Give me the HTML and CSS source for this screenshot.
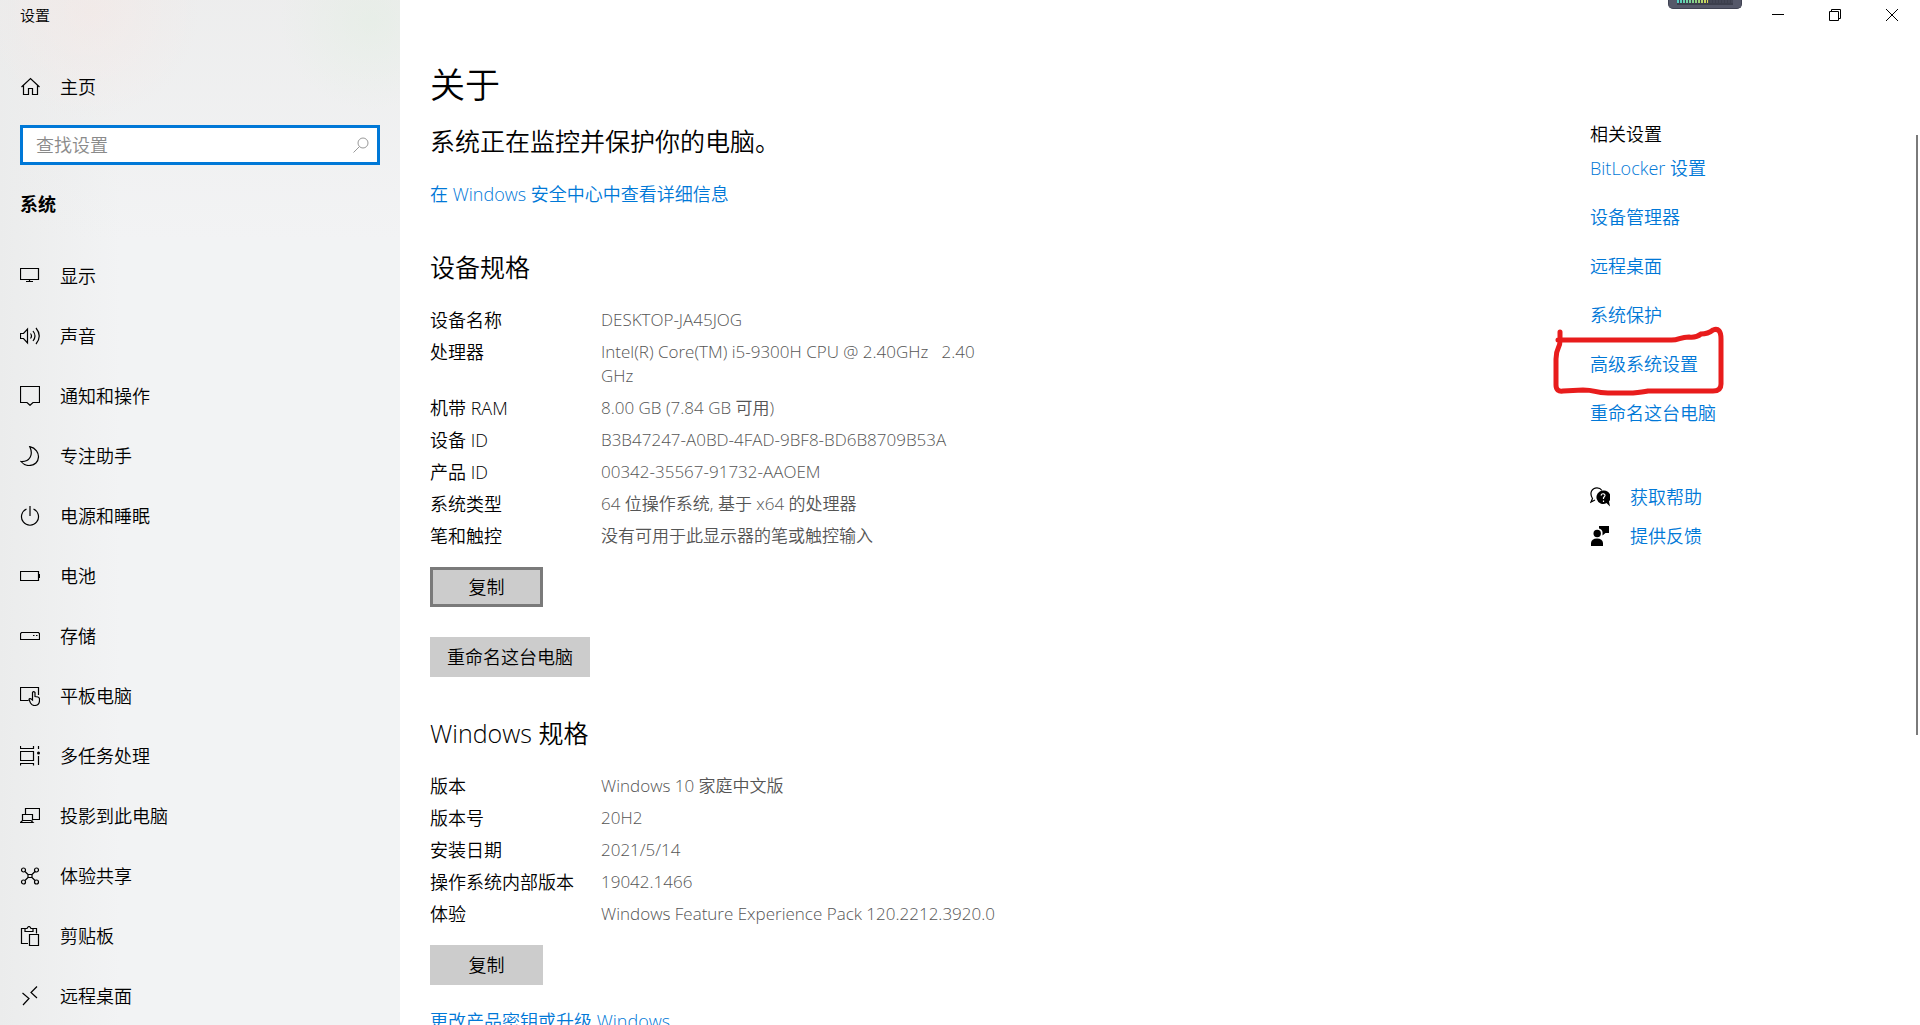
FILE: index.html
```html
<!DOCTYPE html>
<html lang="zh-CN">
<head>
  <meta charset="UTF-8">
  <meta name="viewport" content="width=device-width, initial-scale=1.0">
  <title>设置</title>
  <link rel="stylesheet" href="styles.css">
</head>
<body>
  <aside class="sidebar">
    <div class="app-title">设置</div>
    <a class="nav-link home" href="#">
      <svg class="icon" viewBox="0 0 20 20"><path d="M1.5 10 L10.5 1.5 L19.5 10 M3.5 8.5 V17.500 H8.5 V11.500 H12.500 V17.500 H17.500 V8.5"/></svg>
      主页
    </a>
    <div class="search">
      <input type="text" id="search" placeholder="查找设置" aria-label="查找设置">
      <svg class="search-icon" viewBox="0 0 16 16"><circle cx="10" cy="6" r="5"/><path d="M6.500 9.500 L0.500 15.500"/></svg>
    </div>
    <h2 class="group-title">系统</h2>
    <nav class="nav">
      <a class="nav-link" href="#">
        <svg class="icon" viewBox="0 0 20 20"><path d="M0.500 2.500 H18.500 V13.500 H0.500 Z M9.500 13.500 V15.500 M6 15.500 H13"/></svg>
        显示
      </a>
      <a class="nav-link" href="#">
        <svg class="icon" viewBox="0 0 20 20"><path d="M0.500 7.500 H3.500 L7.500 3 V17 L3.500 12.500 H0.500 Z M10.500 7.500 Q12.500 10 10.500 12.500 M13 5 Q17 10 13 15 M16 2 Q22.500 10 16 18"/></svg>
        声音
      </a>
      <a class="nav-link" href="#">
        <svg class="icon" viewBox="0 0 20 20"><path d="M0.500 0.500 H19.500 V16.500 H13 L10 19.300 L7 16.500 H0.500 Z"/></svg>
        通知和操作
      </a>
      <a class="nav-link" href="#">
        <svg class="icon" viewBox="0 0 20 20"><path d="M9.800 0.700 C22 3.500 21 19.500 9 19.500 C5.500 19.500 3 18 1 15.500 C10 16 13.500 8.500 9.800 0.700 Z"/></svg>
        专注助手
      </a>
      <a class="nav-link" href="#">
        <svg class="icon" viewBox="0 0 20 20"><path d="M6.500 3 A8.500 8.500 0 1 0 13.500 3 M10 0 V10"/></svg>
        电源和睡眠
      </a>
      <a class="nav-link" href="#">
        <svg class="icon" viewBox="0 0 20 20"><path d="M0.500 5.500 H18.500 V14.500 H0.500 Z M19.500 8 V12"/></svg>
        电池
      </a>
      <a class="nav-link" href="#">
        <svg class="icon" viewBox="0 0 20 20"><path d="M1.500 6.500 H18.500 L19.500 7.500 V13.500 H0.500 V7.500 Z M13 9.500 H14.500 M16 9.500 H17.500"/></svg>
        存储
      </a>
      <a class="nav-link" href="#">
        <svg class="icon" viewBox="0 0 20 20"><path d="M8.500 14.500 H0.500 V1.500 H18.500 V9 M12.500 14 V6.500 Q13.500 4.800 15 6.500 V10.500 L18 11 Q19.500 11.500 19.500 13 V15 Q19 19.500 14.500 19.500 Q12 19.500 10.500 17 L9 13.500 Q9.500 11.500 12.500 14 Z"/></svg>
        平板电脑
      </a>
      <a class="nav-link" href="#">
        <svg class="icon" viewBox="0 0 20 20"><path d="M0.500 0 V2.500 H13.500 V0 M0.500 5.500 H13.500 V14.500 H0.500 Z M0.500 19.500 V17.500 H13.500 V19.500 M18.500 0 V3 M18.500 10 V19"/><circle class="fill" cx="18.500" cy="7" r="1.500"/></svg>
        多任务处理
      </a>
      <a class="nav-link" href="#">
        <svg class="icon" viewBox="0 0 20 20"><path d="M5.500 8 V2.500 H19.500 V13.500 H13 M2.500 14.500 V8.500 H12.500 V14.500 M0.500 16.500 L2.500 14.500 H11 L13 16.500 Z"/></svg>
        投影到此电脑
      </a>
      <a class="nav-link" href="#">
        <svg class="icon" viewBox="0 0 20 20"><circle cx="3.500" cy="4" r="2"/><circle cx="16.500" cy="4" r="2"/><circle cx="3.500" cy="16" r="2"/><circle cx="16.500" cy="16" r="2"/><path d="M5 5.500 L8 8.500 M15 5.500 L12 8.500 M5 14.500 L8 11.500 M15 14.500 L12 11.500 M8 8.500 H12 V11.500 H8 Z"/></svg>
        体验共享
      </a>
      <a class="nav-link" href="#">
        <svg class="icon" viewBox="0 0 20 20"><path d="M8 17.500 H1.500 V2.500 H5 M13 2.500 H16.500 V7.500 M5 5.500 V2.500 H7 Q9 -1.500 11 2.500 H13 V5.500 Z M9.500 8.500 H18.500 V19.500 H9.500 Z"/></svg>
        剪贴板
      </a>
      <a class="nav-link" href="#">
        <svg class="icon" viewBox="0 0 20 20"><path d="M2.500 7 L9 12.500 L3 19 M17 0.500 L11 6.500 L17 12"/></svg>
        远程桌面
      </a>
    </nav>
  </aside>

  <main class="content">
    <section class="about">
      <h1>关于</h1>
      <p class="status">系统正在监控并保护你的电脑。</p>
      <a class="link" href="#">在 Windows 安全中心中查看详细信息</a>

      <h2>设备规格</h2>
      <table class="specs">
        <tr><th>设备名称</th><td>DESKTOP-JA45JOG</td></tr>
        <tr><th>处理器</th><td>Intel(R) Core(TM) i5-9300H CPU @ 2.40GHz &nbsp; 2.40 GHz</td></tr>
        <tr><th>机带 RAM</th><td>8.00 GB (7.84 GB 可用)</td></tr>
        <tr><th>设备 ID</th><td>B3B47247-A0BD-4FAD-9BF8-BD6B8709B53A</td></tr>
        <tr><th>产品 ID</th><td>00342-35567-91732-AAOEM</td></tr>
        <tr><th>系统类型</th><td>64 位操作系统, 基于 x64 的处理器</td></tr>
        <tr><th>笔和触控</th><td>没有可用于此显示器的笔或触控输入</td></tr>
      </table>
      <div class="buttons">
        <button class="btn copy active" type="button">复制</button>
        <button class="btn" type="button">重命名这台电脑</button>
      </div>

      <h2>Windows 规格</h2>
      <table class="specs">
        <tr><th>版本</th><td>Windows 10 家庭中文版</td></tr>
        <tr><th>版本号</th><td>20H2</td></tr>
        <tr><th>安装日期</th><td>2021/5/14</td></tr>
        <tr><th>操作系统内部版本</th><td>19042.1466</td></tr>
        <tr><th>体验</th><td>Windows Feature Experience Pack 120.2212.3920.0</td></tr>
      </table>
      <div class="buttons">
        <button class="btn copy" type="button">复制</button>
      </div>
      <a class="link" href="#">更改产品密钥或升级 Windows</a>
    </section>

    <aside class="related">
      <h3>相关设置</h3>
      <ul class="related-links">
        <li><a class="link" href="#">BitLocker 设置</a></li>
        <li><a class="link" href="#">设备管理器</a></li>
        <li><a class="link" href="#">远程桌面</a></li>
        <li><a class="link" href="#">系统保护</a></li>
        <li class="marked">
          <a class="link" href="#">高级系统设置</a>
          <svg class="marker" viewBox="0 0 172 72"><path d="M7 7 V16 C7 24 3 22 3 34 V60 Q3 67 10 66 L30 65 C44 65 40 68 55 68 H80 Q90 67 95 66 H160 Q168 66 168 59 V14 Q168 2 160 5 Q155 9 148 9 Q143 13 136 12 C126 12 126 16 116 15 H5"/></svg>
        </li>
        <li><a class="link" href="#">重命名这台电脑</a></li>
      </ul>
      <ul class="support">
        <li>
          <svg class="icon" viewBox="0 0 20 20"><path d="M5 13 L1 15 L2.500 11.500 C-1 6 2 0.800 7 0.800 C9.500 0.800 11 2 12 3.500"/><path class="fill" d="M13 3.500 A6.700 6.700 0 1 0 16.500 16 L20 19.500 L19 14.500 A6.700 6.700 0 0 0 13 3.500 Z"/><path class="light" d="M11 8.500 Q11.500 6.500 13.500 6.800 Q15.500 7.500 14.800 9 L13.500 10.800 V12 M13.500 13.500 V15"/></svg>
          <a class="link" href="#">获取帮助</a>
        </li>
        <li>
          <svg class="icon" viewBox="0 0 20 20"><circle class="fill" cx="7.200" cy="7.500" r="3.700"/><path class="fill" d="M1 20 V17 Q1.500 12.500 7 12.500 Q12.500 12.500 13 17 V20 Z M9 0 H19 V7 H15.500 L12.500 9.500 V6 Q12 3 9 2.500 Z"/></svg>
          <a class="link" href="#">提供反馈</a>
        </li>
      </ul>
    </aside>
    <div class="scroll-thumb"></div>
  </main>

  <div class="window-buttons">
    <button type="button" aria-label="最小化"><svg viewBox="0 0 12 12"><path d="M0 5.500 H12"/></svg></button>
    <button type="button" aria-label="还原"><svg viewBox="0 0 12 12"><path d="M0.500 2.500 H9.500 V11.500 H0.500 Z M2.500 2.500 V0.500 H11.500 V9.500 H9.500"/></svg></button>
    <button type="button" aria-label="关闭"><svg viewBox="0 0 12 12"><path d="M0 0 L12 12 M12 0 L0 12"/></svg></button>
  </div>
  <div class="meter"><div class="meter-bars"></div></div>
</body>
</html>
```
FILE: styles.css
```css
* {
  box-sizing: border-box;
  margin: 0;
  padding: 0;
}

body {
  display: flex;
  height: 100vh;
  overflow: hidden;
  font-family: 'Open Sans', 'Noto Sans CJK SC', sans-serif;
  font-size: 18px;
  font-weight: 350;
  line-height: 24px;
  color: #000;
  background: #fff;
}

h1, h2, h3, th {
  font-weight: inherit;
  text-align: left;
}

ul {
  list-style: none;
}

svg {
  flex: none;
  fill: none;
  stroke: #000;
  stroke-width: 1.2;
}

.fill {
  fill: #000;
  stroke: none;
}

.light {
  stroke: #fff;
}

.icon {
  width: 20px;
  height: 20px;
}

/* Sidebar */
.sidebar {
  flex: 0 0 400px;
  padding: 0 20px;
  overflow: hidden;
  background:
    radial-gradient(circle at 90px 10px, rgba(255, 225, 218, 0.25), transparent 110px),
    radial-gradient(circle at 370px 20px, rgba(220, 238, 220, 0.35), transparent 90px),
    linear-gradient(rgba(236, 236, 236, 0.8), transparent 240px),
    linear-gradient(90deg, #ebecec, #f2f3f4 30%, #f2f3f4);
}

.app-title {
  height: 57px;
  padding-top: 3px;
  font-size: 15px;
}

.nav-link {
  display: flex;
  align-items: center;
  gap: 20px;
  height: 60px;
  color: #000;
  text-decoration: none;
}

.nav-link:hover {
  background: rgba(0, 0, 0, 0.06);
}

.search {
  display: flex;
  align-items: center;
  height: 40px;
  margin-top: 8px;
  padding: 0 8px 0 13px;
  border: 3px solid #0078d7;
  background: #fff;
}

.search input {
  flex: 1;
  min-width: 0;
  border: none;
  outline: none;
  font: inherit;
  background: none;
}

.search input::placeholder {
  color: #8a8a8a;
}

.search-icon {
  width: 16px;
  height: 16px;
  stroke: #999;
  stroke-width: 1;
}

.group-title {
  margin: 27px 0 30px;
  font-size: 18px;
  font-weight: 700;
}

/* Content */
.content {
  position: relative;
  flex: 1;
  display: flex;
  justify-content: space-between;
  padding-left: 30px;
  overflow: hidden;
}

.about {
  width: 580px;
  padding-top: 61px;
}

.about h1 {
  font-size: 35px;
  line-height: 48px;
}

.status {
  margin: 16px 0 25px;
  font-size: 25px;
  line-height: 32px;
}

.about h2 {
  margin: 45px 0 21px;
  font-size: 25px;
  line-height: 32px;
}

.about .buttons + h2 {
  margin-top: 40px;
}

.link {
  color: #0078d7;
  text-decoration: none;
}

.link:hover {
  color: #666;
}

.about > .link {
  display: block;
}

.specs {
  width: 100%;
  border-collapse: collapse;
}

.specs th {
  width: 171px;
  padding: 4px 0;
  vertical-align: top;
}

.specs td {
  padding: 4px 0;
  font-size: 17px;
  color: #555;
}

.buttons {
  display: flex;
  flex-direction: column;
  align-items: flex-start;
  gap: 30px;
  margin: 15px 0 24px;
}

.btn {
  height: 40px;
  padding: 0 14px;
  border: 3px solid #ccc;
  font: inherit;
  color: #000;
  background: #ccc;
}

.btn.copy {
  width: 113px;
}

.btn.active, .btn:hover {
  border-color: #7a7a7a;
}

/* Related settings */
.related {
  width: 330px;
  padding-top: 122px;
}

.related h3 {
  font-size: 18px;
}

.related-links {
  display: grid;
  gap: 25px;
  margin: 10px 0 60px;
}

.marked {
  position: relative;
}

.marker {
  position: absolute;
  left: -37px;
  top: -27px;
  width: 172px;
  height: 72px;
  stroke: #e81c1c;
  stroke-width: 5;
  stroke-linecap: round;
  pointer-events: none;
}

.support {
  display: grid;
  gap: 15px;
}

.support li {
  display: flex;
  align-items: center;
  gap: 20px;
}

.scroll-thumb {
  position: absolute;
  top: 135px;
  right: 2px;
  width: 2px;
  height: 600px;
  background: #7a7a7a;
}

/* Over the window */
.window-buttons {
  position: absolute;
  top: 0;
  right: 0;
  display: flex;
}

.window-buttons button {
  display: grid;
  place-items: center;
  width: 57px;
  height: 30px;
  border: none;
  background: none;
}

.window-buttons svg {
  width: 12px;
  height: 12px;
  stroke-width: 1;
}

.meter {
  position: absolute;
  top: 0;
  right: 178px;
  width: 74px;
  height: 9px;
  padding: 0 8px;
  border: 1px solid #3f4252;
  border-top: none;
  border-radius: 0 0 5px 5px;
  background: #555869;
}

.meter-bars {
  height: 5px;
  background:
    repeating-linear-gradient(90deg, transparent 0 2px, #3c3f4d 2px 3px),
    linear-gradient(transparent 3px, #3c3f4d 3px),
    linear-gradient(90deg, #4fd0c8, #8fd080 35%, #e0d850 56%, #444756 56%);
}
```
